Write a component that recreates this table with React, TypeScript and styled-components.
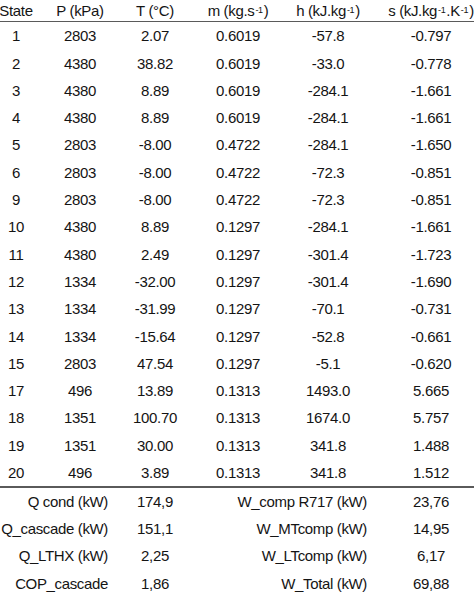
import React from "react";
import styled, { createGlobalStyle } from "styled-components";

const GlobalStyle = createGlobalStyle`
  html, body {
    margin: 0;
    padding: 0;
    background: #ffffff;
    overflow: hidden;
  }
  body {
    font-family: "Liberation Sans", Arial, Helvetica, sans-serif;
    color: #141414;
  }
`;

const ROW_HEIGHT = 27.3;

const Page = styled.div`
  width: 474px;
  overflow: hidden;
  font-size: 15px;
  letter-spacing: -0.35px;
`;

const StateGrid = styled.div`
  display: grid;
  width: 500px;
  grid-template-columns: 32px 96px 54px 112px 68px 138px;
`;

const SummaryGrid = styled.div`
  display: grid;
  width: 500px;
  grid-template-columns: 108px 94px 165px 128px;
`;

const Cell = styled.div<{ $height: number }>`
  display: flex;
  align-items: center;
  justify-content: center;
  height: ${(p) => p.$height}px;
  white-space: nowrap;
`;

const Label = styled(Cell)`
  justify-content: flex-end;
`;

const Rule = styled.div`
  height: 1.6px;
  background: #5a5a5a;
`;

const Sup = styled.sup`
  font-size: 9px;
  vertical-align: 5px;
  line-height: 0;
  margin: 0 1px;
`;

const header: React.ReactNode[] = [
  "State",
  "P (kPa)",
  "T (\u00b0C)",
  <>
    m (kg.s<Sup>-1</Sup>)
  </>,
  <>
    h (kJ.kg<Sup>-1</Sup>)
  </>,
  <>
    s (kJ.kg<Sup>-1</Sup>.K<Sup>-1</Sup>)
  </>,
];

const states: string[][] = [
  ["1", "2803", "2.07", "0.6019", "-57.8", "-0.797"],
  ["2", "4380", "38.82", "0.6019", "-33.0", "-0.778"],
  ["3", "4380", "8.89", "0.6019", "-284.1", "-1.661"],
  ["4", "4380", "8.89", "0.6019", "-284.1", "-1.661"],
  ["5", "2803", "-8.00", "0.4722", "-284.1", "-1.650"],
  ["6", "2803", "-8.00", "0.4722", "-72.3", "-0.851"],
  ["9", "2803", "-8.00", "0.4722", "-72.3", "-0.851"],
  ["10", "4380", "8.89", "0.1297", "-284.1", "-1.661"],
  ["11", "4380", "2.49", "0.1297", "-301.4", "-1.723"],
  ["12", "1334", "-32.00", "0.1297", "-301.4", "-1.690"],
  ["13", "1334", "-31.99", "0.1297", "-70.1", "-0.731"],
  ["14", "1334", "-15.64", "0.1297", "-52.8", "-0.661"],
  ["15", "2803", "47.54", "0.1297", "-5.1", "-0.620"],
  ["17", "496", "13.89", "0.1313", "1493.0", "5.665"],
  ["18", "1351", "100.70", "0.1313", "1674.0", "5.757"],
  ["19", "1351", "30.00", "0.1313", "341.8", "1.488"],
  ["20", "496", "3.89", "0.1313", "341.8", "1.512"],
];

const summary: string[][] = [
  ["Q cond (kW)", "174,9", "W_comp R717 (kW)", "23,76"],
  ["Q_cascade (kW)", "151,1", "W_MTcomp (kW)", "14,95"],
  ["Q_LTHX (kW)", "2,25", "W_LTcomp (kW)", "6,17"],
  ["COP_cascade", "1,86", "W_Total (kW)", "69,88"],
];

export default function App() {
  return (
    <Page>
      <GlobalStyle />
      <StateGrid>
        {header.map((h, i) => (
          <Cell key={i} $height={20.5}>
            {h}
          </Cell>
        ))}
      </StateGrid>
      <Rule />
      <StateGrid>
        {states.map((row, r) =>
          row.map((value, c) => (
            <Cell key={`${r}-${c}`} $height={ROW_HEIGHT}>
              {value}
            </Cell>
          ))
        )}
      </StateGrid>
      <Rule />
      <SummaryGrid>
        {summary.map((row, r) =>
          row.map((value, c) =>
            c % 2 === 0 ? (
              <Label key={`${r}-${c}`} $height={ROW_HEIGHT}>
                {value}
              </Label>
            ) : (
              <Cell key={`${r}-${c}`} $height={ROW_HEIGHT}>
                {value}
              </Cell>
            )
          )
        )}
      </SummaryGrid>
    </Page>
  );
}
